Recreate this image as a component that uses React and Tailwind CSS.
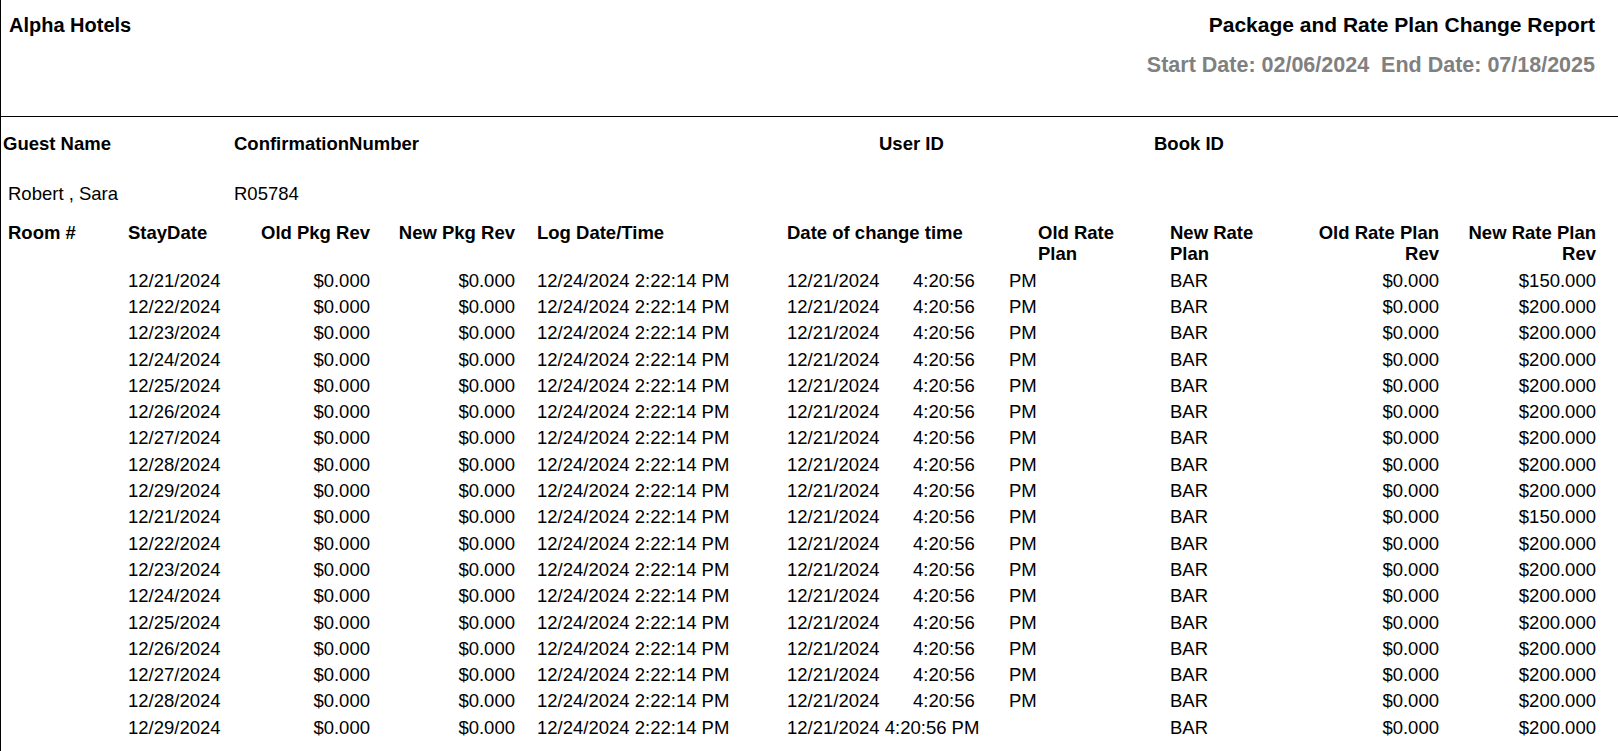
const dates=["12/21/2024","12/22/2024","12/23/2024","12/24/2024","12/25/2024","12/26/2024","12/27/2024","12/28/2024","12/29/2024","12/21/2024","12/22/2024","12/23/2024","12/24/2024","12/25/2024","12/26/2024","12/27/2024","12/28/2024","12/29/2024"];
function Row({d,last}){
  const nv = d==="12/21/2024"?"$150.000":"$200.000";
  return (
    <div className="flex h-[26.3px] items-center whitespace-nowrap">
      <div className="w-[127px]"></div>
      <div className="w-[100px]">{d}</div>
      <div className="w-[142px] text-right">$0.000</div>
      <div className="w-[145px] text-right">$0.000</div>
      <div className="w-[272px] pl-[22px]">12/24/2024 2:22:14 PM</div>
      {last ? <div className="w-[251px]">12/21/2024 4:20:56 PM</div> : <>
        <div className="w-[126px]">12/21/2024</div>
        <div className="w-[96px]">4:20:56</div>
        <div className="w-[29px]">PM</div></>}
      <div className="w-[132px]"></div>
      <div className="w-[124px]">BAR</div>
      <div className="w-[145px] text-right">$0.000</div>
      <div className="w-[157px] text-right">{nv}</div>
    </div>
  );
}
export default function App(){
  return (
    <div className="w-[1618px] h-[751px] overflow-hidden bg-white text-black text-[18.5px] leading-[21px] border-l border-black" style={{fontFamily:'"Liberation Sans", Arial, sans-serif'}}>
      <div className="h-[117px] border-b border-black flex justify-between pl-[8px] pr-[23px] pt-[12px] whitespace-nowrap">
        <div className="text-[20px] leading-[26px] font-bold">Alpha Hotels</div>
        <div className="text-right">
          <div className="text-[21px] leading-[26px] font-bold">Package and Rate Plan Change Report</div>
          <div className="text-[21.5px] leading-[26px] font-bold text-[#808080] mt-[14px]">Start Date: 02/06/2024&nbsp; End Date: 07/18/2025</div>
        </div>
      </div>
      <div className="flex font-bold h-[52px] items-center">
        <div className="w-[233px] pl-[2px]">Guest Name</div>
        <div className="w-[645px]">ConfirmationNumber</div>
        <div className="w-[275px]">User ID</div>
        <div>Book ID</div>
      </div>
      <div className="flex h-[48px] items-center">
        <div className="w-[233px] pl-[7px]">Robert , Sara</div>
        <div>R05784</div>
      </div>
      <div className="flex font-bold h-[50px] pt-[5px] whitespace-nowrap">
        <div className="w-[127px] pl-[7px]">Room #</div>
        <div className="w-[100px]">StayDate</div>
        <div className="w-[142px] text-right">Old Pkg Rev</div>
        <div className="w-[145px] text-right">New Pkg Rev</div>
        <div className="w-[272px] pl-[22px]">Log Date/Time</div>
        <div className="w-[251px]">Date of change time</div>
        <div className="w-[132px]">Old Rate<br/>Plan</div>
        <div className="w-[124px]">New Rate<br/>Plan</div>
        <div className="w-[145px] text-right">Old Rate Plan<br/>Rev</div>
        <div className="w-[157px] text-right">New Rate Plan<br/>Rev</div>
      </div>
      {dates.map((d,i)=><Row key={i} d={d} last={i===dates.length-1}/>)}
    </div>
  );
}
